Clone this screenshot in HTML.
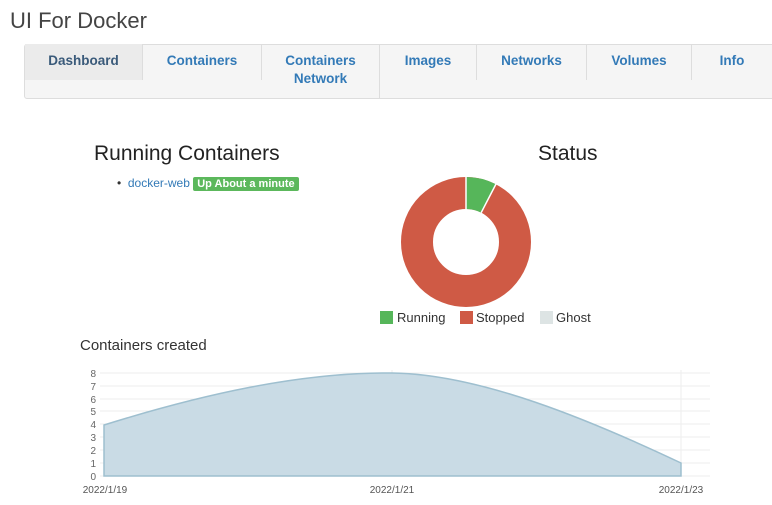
<!DOCTYPE html>
<html><head><meta charset="utf-8"><style>
body{margin:0;width:772px;height:505px;background:#fff;font-family:"Liberation Sans",sans-serif;position:relative;overflow:hidden;color:#333}
.a{position:absolute}
.tab{position:absolute;top:44px;height:36px;color:#337ab7;font-size:13.5px;font-weight:bold;text-align:center;line-height:18px;padding-top:8px;box-sizing:border-box;border-right:1px solid #ddd}
</style></head><body>
<div class="a" style="left:10px;top:8px;font-size:22px;color:#444">UI For Docker</div>
<div class="a" style="left:24px;top:44px;width:760px;height:55px;background:#f5f5f5;border:1px solid #ddd;border-radius:3px;box-sizing:border-box"></div>
<div class="tab" style="left:25px;width:118px;background:#ebebeb;color:#3a5a7a;height:36px">Dashboard</div>
<div class="tab" style="left:143px;width:119px">Containers</div>
<div class="tab" style="left:262px;width:118px;height:55px">Containers<br>Network</div>
<div class="tab" style="left:380px;width:97px">Images</div>
<div class="tab" style="left:477px;width:110px">Networks</div>
<div class="tab" style="left:587px;width:105px">Volumes</div>
<div class="tab" style="left:692px;width:80px;border:none">Info</div>
<div class="a" style="left:94px;top:142px;font-size:21px;color:#222">Running Containers</div>
<div class="a" style="left:538px;top:142px;font-size:21px;color:#222">Status</div>
<div class="a" style="left:117px;top:176px;font-size:12px;color:#337ab7"><span style="color:#333">•</span>&nbsp; docker-web <span style="background:#5cb85c;color:#fff;font-weight:bold;font-size:11px;padding:1px 4px;border-radius:2px">Up About a minute</span></div>
<svg class="a" style="left:0;top:0" width="772" height="505">
<circle cx="466" cy="242" r="49" fill="none" stroke="#cf5a45" stroke-width="32"/>
<circle cx="466" cy="242" r="49" fill="none" stroke="#56b65a" stroke-width="32" stroke-dasharray="23 300" transform="rotate(-90 466 242)"/>
<line x1="466" y1="242" x2="466" y2="176" stroke="#fff" stroke-width="1.5"/>
<line x1="466" y1="242" x2="496" y2="184" stroke="#fff" stroke-width="1.5" stroke-dasharray="0 33 40"/>
<rect x="380" y="311" width="13" height="13" fill="#56b65a"/>
<rect x="460" y="311" width="13" height="13" fill="#cf5a45"/>
<rect x="540" y="311" width="13" height="13" fill="#dde4e4"/>
<g font-size="13" fill="#333"><text x="397" y="322">Running</text><text x="476" y="322">Stopped</text><text x="556" y="322">Ghost</text></g>
<text x="80" y="350" font-size="15" fill="#333">Containers created</text>
<g stroke="#eee" stroke-width="1">
<line x1="100" y1="373" x2="710" y2="373"/><line x1="100" y1="386" x2="710" y2="386"/><line x1="100" y1="399" x2="710" y2="399"/><line x1="100" y1="411" x2="710" y2="411"/><line x1="100" y1="424" x2="710" y2="424"/><line x1="100" y1="437" x2="710" y2="437"/><line x1="100" y1="450" x2="710" y2="450"/><line x1="100" y1="463" x2="710" y2="463"/><line x1="100" y1="476" x2="710" y2="476"/>
<line x1="392" y1="370" x2="392" y2="476"/><line x1="681" y1="370" x2="681" y2="476"/>
</g>
<path d="M104 425 C200 395 300 372 392 373 C480 374 590 420 681 463 L681 476 L104 476 Z" fill="#c9dbe5" stroke="#9ebfcf" stroke-width="1.5"/>
<g font-size="10" fill="#666" text-anchor="end">
<text x="96" y="377">8</text><text x="96" y="390">7</text><text x="96" y="403">6</text><text x="96" y="415">5</text><text x="96" y="428">4</text><text x="96" y="441">3</text><text x="96" y="454">2</text><text x="96" y="467">1</text><text x="96" y="480">0</text></g>
<g font-size="10" fill="#555" text-anchor="middle"><text x="105" y="493">2022/1/19</text><text x="392" y="493">2022/1/21</text><text x="681" y="493">2022/1/23</text></g>
</svg>
</body></html>
